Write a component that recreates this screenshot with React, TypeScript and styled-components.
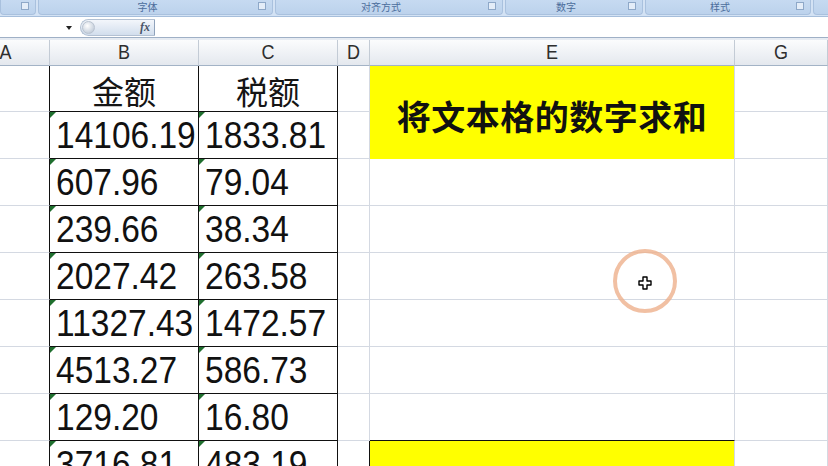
import styled, { createGlobalStyle } from "styled-components";

const GRID = "#d4d9e2";
const INK = "#111";

const GlobalStyle = createGlobalStyle`
  html, body {
    margin: 0;
    padding: 0;
    background: #fff;
  }
  body {
    width: 828px;
    height: 466px;
    overflow: hidden;
    font-family: "Liberation Sans", Arial, sans-serif;
  }
`;

const ribbonGroups = [
  { w: 36, label: "" },
  { w: 235, label: "字体" },
  { w: 228, label: "对齐方式" },
  { w: 138, label: "数字" },
  { w: 166, label: "样式" },
  { w: 24, label: "" },
];

const columns = ["A", "B", "C", "D", "E", "G"];

const rows: [string, string][] = [
  ["金额", "税额"],
  ["14106.19", "1833.81"],
  ["607.96", "79.04"],
  ["239.66", "38.34"],
  ["2027.42", "263.58"],
  ["11327.43", "1472.57"],
  ["4513.27", "586.73"],
  ["129.20", "16.80"],
  ["3716.81", "483.19"],
];

const App = () => {
  return (
    <Screen>
      <GlobalStyle />

      <Ribbon>
        {ribbonGroups.map((g, i) => (
          <Group key={i} $w={g.w}>
            <GroupLabel>{g.label}</GroupLabel>
            {i < ribbonGroups.length - 1 && <Launcher />}
          </Group>
        ))}
      </Ribbon>

      <FormulaBar>
        <NameBox>
          <Caret />
        </NameBox>
        <FxPill>
          <ExpandKnob />
          <Fx>fx</Fx>
        </FxPill>
        <FormulaInput />
      </FormulaBar>
      <Band />

      <Sheet>
        {columns.map((c) => (
          <HeadCell key={c}>
            <HeadLetter>{c}</HeadLetter>
          </HeadCell>
        ))}

        {rows.map(([amount, tax], i) => {
          const isHead = i === 0;
          return [
            <Cell key={`a${i}`} $right={INK} />,
            <Cell key={`b${i}`} $right={INK} $bottom={INK} $flag={!isHead} $center={isHead}>
              {isHead ? <HeadText>{amount}</HeadText> : <NumText>{amount}</NumText>}
            </Cell>,
            <Cell key={`c${i}`} $right={INK} $bottom={INK} $flag={!isHead} $center={isHead}>
              {isHead ? <HeadText>{tax}</HeadText> : <NumText>{tax}</NumText>}
            </Cell>,
            <Cell key={`d${i}`} $right={i === 8 ? INK : GRID} />,
            i === 0 ? (
              <TitleCell key={`e${i}`}>将文本格的数字求和</TitleCell>
            ) : i === 1 ? null : (
              <Cell
                key={`e${i}`}
                $bottom={i === 7 ? INK : GRID}
                $bg={i === 8 ? "#ffff00" : "#fff"}
              />
            ),
            <Cell key={`g${i}`} />,
          ];
        })}
      </Sheet>

      <CursorRing>
        <svg width="14" height="14" viewBox="0 0 14 14">
          <path
            d="M5 1h4v4h4v4H9v4H5V9H1V5h4z"
            fill="#fff"
            stroke="#000"
            strokeWidth="1.4"
            strokeLinejoin="round"
          />
        </svg>
      </CursorRing>
    </Screen>
  );
};

const Screen = styled.div`
  position: relative;
  width: 828px;
  height: 466px;
  overflow: hidden;
  display: flex;
  flex-direction: column;
  background: #fff;
`;

const Ribbon = styled.div`
  display: flex;
  gap: 2px;
  flex: 0 0 16px;
  background: #d3e2f4;
  border-bottom: 1px solid #a6bedb;
`;

const Group = styled.div<{ $w: number }>`
  position: relative;
  flex: 0 0 ${({ $w }) => $w}px;
  height: 15px;
  box-sizing: border-box;
  padding-right: 16px;
  display: flex;
  align-items: center;
  justify-content: center;
  background: linear-gradient(#c6daf1, #bcd2ec);
  border: 1px solid #a9c1de;
  border-top: none;
  border-radius: 0 0 4px 4px;
`;

const GroupLabel = styled.span`
  font-family: "Noto Sans CJK SC", sans-serif;
  font-size: 10px;
  line-height: 12px;
  color: #4b6d9c;
`;

const Launcher = styled.span`
  position: absolute;
  right: 6px;
  top: 2px;
  width: 6px;
  height: 6px;
  border: 1px solid #8ea8c8;
  background: #e4edf8;
`;

const FormulaBar = styled.div`
  display: flex;
  flex: 0 0 19px;
  margin-top: 1px;
  background: #fff;
  border-bottom: 1px solid #9fb0c6;
`;

const NameBox = styled.div`
  flex: 0 0 80px;
  box-sizing: border-box;
  padding-right: 8px;
  display: flex;
  align-items: center;
  justify-content: flex-end;
`;

const Caret = styled.span`
  width: 0;
  height: 0;
  border-left: 3.5px solid transparent;
  border-right: 3.5px solid transparent;
  border-top: 4px solid #222;
`;

const FxPill = styled.div`
  flex: 0 0 75px;
  height: 17px;
  margin-top: 1px;
  box-sizing: border-box;
  display: flex;
  align-items: center;
  justify-content: space-between;
  padding: 0 4px 0 1px;
  border-radius: 9px 0 0 9px;
  border: 1px solid #b3c1d3;
  border-right-color: #8fa2bb;
  background: linear-gradient(#f3f6fb, #d2deed);
`;

const ExpandKnob = styled.span`
  width: 13px;
  height: 13px;
  border-radius: 50%;
  background: radial-gradient(circle at 40% 35%, #ffffff, #c9d2de 70%, #aeb9c8);
  border: 1px solid #b9c3d0;
  box-sizing: border-box;
`;

const Fx = styled.span`
  font-family: "Liberation Serif", "Times New Roman", serif;
  font-style: italic;
  font-weight: bold;
  font-size: 12px;
  color: #4a5568;
`;

const FormulaInput = styled.div`
  flex: 1;
  background: #fff;
`;

const Band = styled.div`
  flex: 0 0 2px;
  background: #e6ebf2;
`;

const Sheet = styled.div`
  display: grid;
  margin-left: -38px;
  grid-template-columns: 88px 149px 139px 32px 365px 93px;
  grid-template-rows: 26px 46px repeat(8, 47px);
`;

const HeadCell = styled.div`
  box-sizing: border-box;
  display: flex;
  align-items: center;
  justify-content: center;
  background: linear-gradient(#fbfcfd, #e4e8ee);
  border-right: 1px solid #c3cbd5;
  border-bottom: 1px solid #a3b3c6;
`;

const HeadLetter = styled.span`
  display: inline-block;
  font-size: 18px;
  color: #2e2e2e;
  transform: scaleY(1.12);
`;

const Cell = styled.div<{
  $right?: string;
  $bottom?: string;
  $bg?: string;
  $flag?: boolean;
  $center?: boolean;
}>`
  position: relative;
  box-sizing: border-box;
  display: flex;
  align-items: center;
  justify-content: ${({ $center }) => ($center ? "center" : "flex-start")};
  background: ${({ $bg }) => $bg ?? "#fff"};
  border-right: 1px solid ${({ $right }) => $right ?? GRID};
  border-bottom: 1px solid ${({ $bottom }) => $bottom ?? GRID};

  ${({ $flag }) =>
    $flag &&
    `
    &::before {
      content: "";
      position: absolute;
      top: 0;
      left: 0;
      border-top: 6px solid #1f6f2e;
      border-right: 6px solid transparent;
    }
  `}
`;

const NumText = styled.span`
  display: inline-block;
  padding-left: 6px;
  padding-top: 2px;
  font-family: "Liberation Sans", Arial, sans-serif;
  font-size: 33.5px;
  line-height: 1;
  color: #111;
  white-space: nowrap;
  transform: scaleY(1.12);
`;

const HeadText = styled.span`
  font-family: "Noto Sans CJK SC", sans-serif;
  font-size: 32px;
  line-height: 1;
  color: #151515;
  padding-top: 2px;
`;

const TitleCell = styled.div`
  grid-row: span 2;
  box-sizing: border-box;
  display: flex;
  align-items: center;
  justify-content: center;
  padding-top: 5px;
  background: #ffff00;
  border-right: 1px solid ${GRID};
  font-family: "Noto Sans CJK SC", sans-serif;
  font-weight: 700;
  font-size: 34px;
  letter-spacing: 0.5px;
  color: #111;
`;

const CursorRing = styled.div`
  position: absolute;
  left: 613px;
  top: 249px;
  width: 64px;
  height: 64px;
  box-sizing: border-box;
  border-radius: 50%;
  border: 4px solid rgba(238, 176, 140, 0.8);
  display: flex;
  align-items: center;
  justify-content: center;
  padding-top: 3px;
`;

export default App;
